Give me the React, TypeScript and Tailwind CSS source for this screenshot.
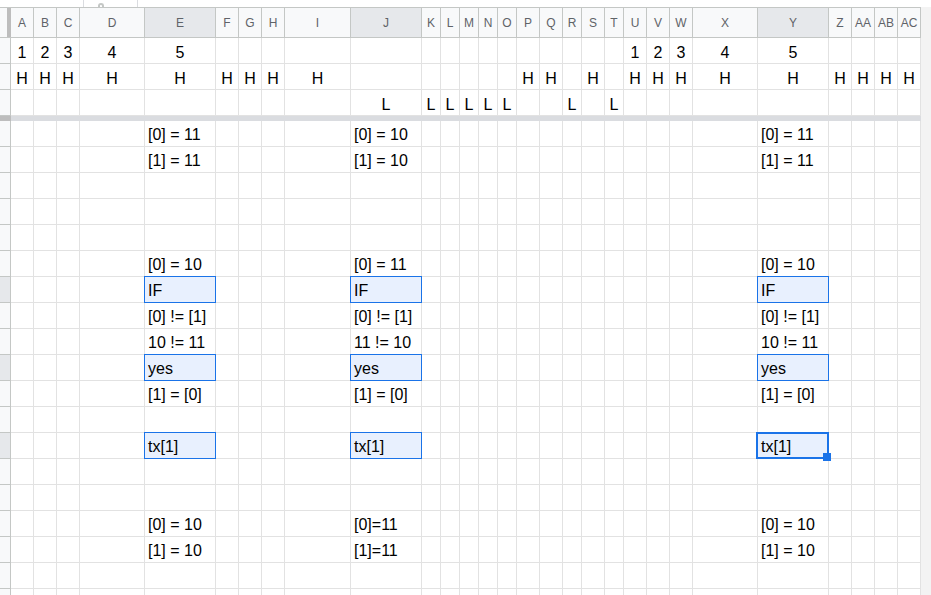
import React from "react";

type Col = { id: string; w: string };

const COLS: Col[] = [
  { id: "A", w: "w-[23px]" },
  { id: "B", w: "w-[23px]" },
  { id: "C", w: "w-[23px]" },
  { id: "D", w: "w-[65px]" },
  { id: "E", w: "w-[71px]" },
  { id: "F", w: "w-[23px]" },
  { id: "G", w: "w-[23px]" },
  { id: "H", w: "w-[23px]" },
  { id: "I", w: "w-[66px]" },
  { id: "J", w: "w-[71px]" },
  { id: "K", w: "w-[19px]" },
  { id: "L", w: "w-[19px]" },
  { id: "M", w: "w-[19px]" },
  { id: "N", w: "w-[19px]" },
  { id: "O", w: "w-[19px]" },
  { id: "P", w: "w-[23px]" },
  { id: "Q", w: "w-[23px]" },
  { id: "R", w: "w-[19px]" },
  { id: "S", w: "w-[23px]" },
  { id: "T", w: "w-[19px]" },
  { id: "U", w: "w-[23px]" },
  { id: "V", w: "w-[23px]" },
  { id: "W", w: "w-[23px]" },
  { id: "X", w: "w-[65px]" },
  { id: "Y", w: "w-[71px]" },
  { id: "Z", w: "w-[23px]" },
  { id: "AA", w: "w-[23px]" },
  { id: "AB", w: "w-[23px]" },
  { id: "AC", w: "w-[23px]" },
];

// columns with the selection highlight in the header
const SEL_COLS = ["E", "J", "Y"];

const FROZEN: Record<string, string>[] = [
  { A: "1", B: "2", C: "3", D: "4", E: "5", U: "1", V: "2", W: "3", X: "4", Y: "5" },
  {
    A: "H", B: "H", C: "H", D: "H", E: "H", F: "H", G: "H", H: "H", I: "H",
    P: "H", Q: "H", S: "H",
    U: "H", V: "H", W: "H", X: "H", Y: "H", Z: "H", AA: "H", AB: "H", AC: "H",
  },
  { J: "L", K: "L", L: "L", M: "L", N: "L", O: "L", R: "L", T: "L" },
];

type Cell = { text: string; sel?: boolean; active?: boolean };

const three = (e: string, j: string, y: string, sel = false): Record<string, Cell> => ({
  E: { text: e, sel },
  J: { text: j, sel },
  Y: { text: y, sel },
});

const BODY: Record<number, Record<string, Cell>> = {
  0: three("[0] = 11", "[0] = 10", "[0] = 11"),
  1: three("[1] = 11", "[1] = 10", "[1] = 11"),
  5: three("[0] = 10", "[0] = 11", "[0] = 10"),
  6: three("IF", "IF", "IF", true),
  7: three("[0] != [1]", "[0] != [1]", "[0] != [1]"),
  8: three("10 != 11", "11 != 10", "10 != 11"),
  9: three("yes", "yes", "yes", true),
  10: three("[1] = [0]", "[1] = [0]", "[1] = [0]"),
  12: {
    E: { text: "tx[1]", sel: true },
    J: { text: "tx[1]", sel: true },
    Y: { text: "tx[1]", sel: true, active: true },
  },
  15: three("[0] = 10", "[0]=11", "[0] = 10"),
  16: three("[1] = 10", "[1]=11", "[1] = 10"),
};

const SEL_ROWS = [6, 9, 12];
const BODY_ROWS = Array.from({ length: 19 }, (_, i) => i);

function BodyCell({ col, cell }: { col: Col; cell?: Cell }) {
  return (
    <div
      className={`${col.w} h-[26px] shrink-0 relative flex items-end pb-[2px] pl-[3px] border-r border-b border-[#e2e2e2] ${
        cell?.sel ? "bg-[#e8f0fe]" : ""
      } ${cell?.active ? "z-10" : ""}`}
    >
      {cell && <span className="whitespace-nowrap leading-[18px]">{cell.text}</span>}
      {cell?.sel && !cell.active && (
        <div className="absolute -left-px -top-px -right-px -bottom-px border border-[#1a73e8]" />
      )}
      {cell?.active && (
        <>
          <div className="absolute -left-[2px] -top-px -right-px -bottom-px border-2 border-[#1a73e8]" />
          <div className="absolute -right-[3px] -bottom-[3px] w-2 h-2 bg-[#1a73e8]" />
        </>
      )}
    </div>
  );
}

export default function App() {
  return (
    <div
      className="w-[931px] h-[595px] overflow-hidden bg-white text-black text-[16px]"
      style={{ fontFamily: '"Liberation Sans", Arial, sans-serif' }}
    >
      {/* bit of the toolbar above the grid */}
      <div className="h-[7px] flex">
        <div className="ml-[83px] w-[55px] h-full border-x border-[#dadce0] flex justify-center">
          <div className="ml-[-20px] mt-[3px] w-[6px] h-[4px] rounded-t-full border-t-2 border-x-2 border-[#c4c7c5]" />
        </div>
      </div>

      <div className="flex">
        <div className="w-[921px] shrink-0">
          {/* column header */}
          <div className="flex h-[31px] border-y border-[#c4c7c5] bg-[#f8f9fa]">
            <div className="w-[11px] shrink-0 flex justify-end">
              <div className="w-[4px] h-full bg-[#bdbdbd]" />
            </div>
            {COLS.map((c) => (
              <div
                key={c.id}
                className={`${c.w} shrink-0 h-full border-r border-[#c4c7c5] flex items-center justify-center pt-[1px] text-[12px] text-[#5f6368] ${
                  SEL_COLS.includes(c.id) ? "bg-[#e6e8eb]" : ""
                }`}
              >
                {c.id}
              </div>
            ))}
          </div>

          {/* frozen rows */}
          {FROZEN.map((row, r) => (
            <div key={r} className="flex h-[26px]">
              <div className="w-[11px] shrink-0 border-r border-b border-[#c4c7c5] bg-[#f8f9fa]" />
              {COLS.map((c) => (
                <div
                  key={c.id}
                  className={`${c.w} shrink-0 h-full border-r border-b border-[#e2e2e2] flex items-end justify-center pb-[1px]`}
                >
                  {row[c.id] && <span className="leading-[18px]">{row[c.id]}</span>}
                </div>
              ))}
            </div>
          ))}

          {/* freeze divider */}
          <div className="flex h-[5px]">
            <div className="w-[11px] shrink-0 bg-[#bdbdbd]" />
            <div className="flex-1 bg-[#dadce0]" />
          </div>

          {/* scrolling rows */}
          {BODY_ROWS.map((r) => (
            <div key={r} className="flex h-[26px]">
              <div
                className={`w-[11px] shrink-0 border-r border-b border-[#c4c7c5] ${
                  SEL_ROWS.includes(r) ? "bg-[#e6e8eb]" : "bg-[#f8f9fa]"
                }`}
              />
              {COLS.map((c) => (
                <BodyCell key={c.id} col={c} cell={BODY[r]?.[c.id]} />
              ))}
            </div>
          ))}
        </div>

        {/* scrollbar gutter */}
        <div className="w-[10px] h-[588px] bg-[#f3f3f3]" />
      </div>
    </div>
  );
}
